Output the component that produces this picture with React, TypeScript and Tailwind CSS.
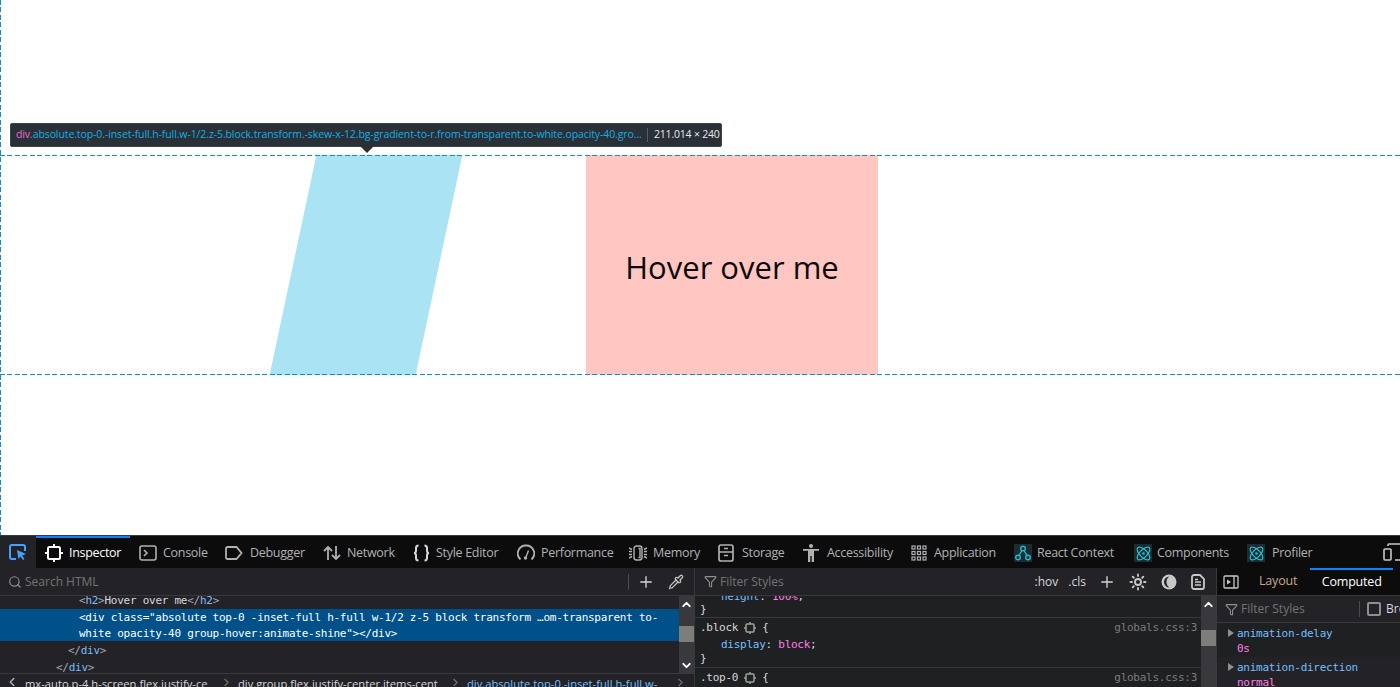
import { Atom, ChevronDown, ChevronLeft, ChevronRight, ChevronUp, Filter, Pipette, Plus, Search, Sun } from "lucide-react";
import type { ReactNode } from "react";

const uiFont = "font-['Open_Sans',sans-serif]";
const monoFont = "font-['DejaVu_Sans_Mono',monospace] text-[11px] tracking-[-0.26px]";

function InspectorIcon() {
  return (
    <svg width="18" height="18" viewBox="0 0 18 18" fill="none" stroke="#fff" strokeWidth="2">
      <rect x="3" y="3" width="12" height="12" rx="1.5" />
      <path d="M9 0v3M9 15v3M0 9h3M15 9h3" />
    </svg>
  );
}

function ConsoleIcon() {
  return (
    <svg width="18" height="16" viewBox="0 0 18 16" fill="none" stroke="#b1b1b3" strokeWidth="1.6">
      <rect x="1" y="1" width="16" height="14" rx="2" />
      <path d="M5 5l3 3-3 3" />
    </svg>
  );
}

function DebuggerIcon() {
  return (
    <svg width="18" height="14" viewBox="0 0 18 14" fill="none" stroke="#b1b1b3" strokeWidth="1.8">
      <path d="M2.5 1h9l5 6-5 6h-9A1.5 1.5 0 0 1 1 11.500v-9A1.500 1.500 0 0 1 2.500 1z" />
    </svg>
  );
}

function NetworkIcon() {
  return (
    <svg width="18" height="16" viewBox="0 0 18 16" fill="none" stroke="#b1b1b3" strokeWidth="1.8">
      <path d="M5 15V2M1 6l4-4 4 4M13 1v13M9 10l4 4 4-4" />
    </svg>
  );
}

function BracesIcon() {
  return (
    <svg width="17" height="18" viewBox="0 0 17 18" fill="none" stroke="#d7d7db" strokeWidth="2">
      <path d="M5.500 1.500C3.500 1.500 3 2.500 3 4v2.500C3 8 2.500 9 1 9c1.500 0 2 1 2 2.500V14c0 1.500.5 2.500 2.500 2.500" />
      <path d="M11.500 1.500c2 0 2.500 1 2.500 2.500v2.500c0 1.500.5 2.500 2 2.500-1.500 0-2 1-2 2.500V14c0 1.500-.5 2.500-2.500 2.500" />
    </svg>
  );
}

function GaugeIcon() {
  return (
    <svg width="18" height="18" viewBox="0 0 18 18" fill="none" stroke="#b1b1b3" strokeWidth="1.800">
      <path d="M3.500 15.500A8 8 0 0 1 9 1.500a8 8 0 0 1 5.500 14" />
      <path d="M9 13l2.500-6.500" strokeWidth="1.400" />
      <circle cx="8.500" cy="14" r="1.700" fill="#b1b1b3" stroke="none" />
    </svg>
  );
}

function MemoryIcon() {
  return (
    <svg width="18" height="16" viewBox="0 0 18 16" fill="none" stroke="#b1b1b3" strokeWidth="1.4">
      <rect x="5" y="1" width="8" height="14" rx="2.500" />
      <path d="M9.500 3.500h1.500v9H9.500M0 3l3 1.500M0 6.500h3M0 9.500h3M0 13l3-1.500M18 3l-3 1.500M18 6.500h-3M18 9.500h-3M18 13l-3-1.500" />
    </svg>
  );
}

function StorageIcon() {
  return (
    <svg width="16" height="18" viewBox="0 0 16 18" fill="none" stroke="#b1b1b3" strokeWidth="1.700">
      <rect x="1" y="1" width="14" height="16" rx="2" />
      <path d="M1 8h14M6 4.500h4M6 11.500h4" />
    </svg>
  );
}

function AccessibilityIcon() {
  return (
    <svg width="16" height="18" viewBox="0 0 16 18" fill="#b1b1b3">
      <circle cx="8" cy="2" r="2" />
      <path d="M0 5h16v1.800h-5V18H8.700v-6H7.300v6H5V6.800H0z" />
    </svg>
  );
}

function ApplicationIcon() {
  return (
    <svg width="16" height="16" viewBox="0 0 16 16" fill="none" stroke="#b1b1b3" strokeWidth="1.200">
      {[1, 6.500, 12].map((y) =>
        [1, 6.500, 12].map((x) => <rect key={`${x}-${y}`} x={x} y={y} width="3" height="3" />),
      )}
    </svg>
  );
}

function ContextIcon() {
  return (
    <span className="flex h-[18px] w-[18px] items-center justify-center bg-[#1d2a2e]">
      <svg width="16" height="16" viewBox="0 0 16 16" fill="none" stroke="#22b8cf" strokeWidth="1.400">
        <circle cx="8" cy="3.500" r="2.300" />
        <circle cx="3" cy="12.500" r="2.300" />
        <circle cx="13" cy="12.500" r="2.300" />
        <path d="M7 5.500l-3 5M9 5.500l3 5" />
      </svg>
    </span>
  );
}

function ReactIcon() {
  return (
    <span className="flex h-[18px] w-[18px] items-center justify-center bg-[#1d2a2e]">
      <Atom size={17} color="#22c3d8" strokeWidth={1.700} />
    </span>
  );
}

function PickerIcon() {
  return (
    <svg width="18" height="16" viewBox="0 0 18 16" fill="none">
      <path d="M7 15H3a2 2 0 0 1-2-2V3a2 2 0 0 1 2-2h11a2 2 0 0 1 2 2v4" stroke="#45a1ff" strokeWidth="2" />
      <path d="M8 6l9 4-4 1.500L15.500 15l-1.500 1-2.500-3.500L9.500 15z" fill="#45a1ff" />
    </svg>
  );
}

function MoonIcon() {
  return (
    <svg width="16" height="16" viewBox="0 0 16 16">
      <circle cx="8" cy="8" r="7.500" fill="#c8c8c8" />
      <path d="M8.500 2.500a5.500 5.500 0 0 0 0 11 6.500 6.500 0 0 1 0-11z" fill="#232327" />
    </svg>
  );
}

function DocIcon() {
  return (
    <svg width="14" height="16" viewBox="0 0 14 16" fill="none" stroke="#c8c8c8" strokeWidth="1.800">
      <path d="M3 1h6l4 4v8a2 2 0 0 1-2 2H3a2 2 0 0 1-2-2V3a2 2 0 0 1 2-2z" />
      <path d="M4 8h6M4 11h6M4 5.500h3" strokeWidth="1.300" />
    </svg>
  );
}

function DockIcon() {
  return (
    <svg width="17" height="18" viewBox="0 0 17 18" fill="none" stroke="#c8c8c8" strokeWidth="1.600">
      <rect x="1" y="6" width="7" height="11" rx="1" />
      <path d="M5 3V2a1 1 0 0 1 1-1h11M12 17h5" />
    </svg>
  );
}

function SidebarIcon() {
  return (
    <svg width="16" height="14" viewBox="0 0 16 14" fill="none" stroke="#c8c8c8" strokeWidth="1.300">
      <rect x="1" y="1" width="14" height="12" rx="1" />
      <path d="M11 1v12" />
      <path d="M4 4.500l4 2.500-4 2.500z" fill="#c8c8c8" stroke="none" />
    </svg>
  );
}

type Tab = { name: string; icon: ReactNode; width: string; gap: string; active?: boolean };

const tabs: Tab[] = [
  { name: "Inspector", icon: <InspectorIcon />, width: "w-[94px]", gap: "pl-[9px] gap-[6px]", active: true },
  { name: "Console", icon: <ConsoleIcon />, width: "w-[95px]", gap: "pl-[9px] gap-[6px]" },
  { name: "Debugger", icon: <DebuggerIcon />, width: "w-[98px]", gap: "pl-0 gap-[7px]" },
  { name: "Network", icon: <NetworkIcon />, width: "w-[90px]", gap: "pl-0 gap-[6px]" },
  { name: "Style Editor", icon: <BracesIcon />, width: "w-[104px]", gap: "pl-0 gap-[6px]" },
  { name: "Performance", icon: <GaugeIcon />, width: "w-[112px]", gap: "pl-0 gap-[6px]" },
  { name: "Memory", icon: <MemoryIcon />, width: "w-[89px]", gap: "pl-0 gap-[6px]" },
  { name: "Storage", icon: <StorageIcon />, width: "w-[85px]", gap: "pl-0 gap-[8px]" },
  { name: "Accessibility", icon: <AccessibilityIcon />, width: "w-[108px]", gap: "pl-0 gap-[8px]" },
  { name: "Application", icon: <ApplicationIcon />, width: "w-[103px]", gap: "pl-0 gap-[7px]" },
  { name: "React Context", icon: <ContextIcon />, width: "w-[120px]", gap: "pl-0 gap-[5px]" },
  { name: "Components", icon: <ReactIcon />, width: "w-[113px]", gap: "pl-0 gap-[5px]" },
  { name: "Profiler", icon: <ReactIcon />, width: "w-[136px]", gap: "pl-0 gap-[7px]" },
];

function Toolbar() {
  return (
    <div className={`flex h-[32px] shrink-0 bg-[#0c0c0d] ${uiFont} text-[12.500px] tracking-[-0.3px]`}>
      <div className="flex w-[36px] items-center justify-center bg-[#232327]">
        <PickerIcon />
      </div>
      {tabs.map((tab) => (
        <div
          key={tab.name}
          className={`flex shrink-0 items-center border-t-2 ${tab.width} ${tab.gap} ${
            tab.active ? "border-[#0a84ff] text-white" : "border-transparent text-[#b1b1b3]"
          }`}
        >
          {tab.icon}
          <span className="whitespace-nowrap">{tab.name}</span>
        </div>
      ))}
      <div className="flex flex-1 items-center justify-end overflow-hidden">
        <DockIcon />
      </div>
    </div>
  );
}

function ScrollBar({ thumb, showDown = true }: { thumb: string; showDown?: boolean }) {
  return (
    <div className="flex h-full w-[15px] shrink-0 flex-col items-center bg-[#38383d]">
      <ChevronUp size={13} color="#fff" strokeWidth={3.500} className="mt-[2px] shrink-0" />
      <div className={`${thumb} h-[16px] w-full shrink-0 bg-[#7d7d7a]`} />
      {showDown && <ChevronDown size={13} color="#fff" strokeWidth={3.500} className="mt-auto mb-[1px]" />}
    </div>
  );
}

function MarkupPanel() {
  return (
    <div className="flex w-[695px] shrink-0 flex-col border-r border-[#38383d]">
      <div className={`flex h-[28px] shrink-0 items-center border-b border-[#38383d] bg-[#232327] pl-[8px] ${uiFont} text-[12px] text-[#737373]`}>
        <Search size={14} color="#8f8f8f" strokeWidth={2} />
        <span className="ml-[3px]">Search HTML</span>
        <div className="ml-auto h-[16px] w-px bg-[#4a4a4f]" />
        <Plus size={18} color="#d4d4d4" strokeWidth={1.800} className="ml-[8px]" />
        <Pipette size={16} color="#c8c8c8" strokeWidth={1.800} className="mr-[10px] ml-[13px]" />
      </div>
      <div className="flex h-[77px] shrink-0 bg-[#232327]">
        <div className={`min-w-0 flex-1 overflow-hidden ${monoFont} text-[#d7d7db]`}>
          <div className="h-[13px] pl-[79px] leading-[10px] whitespace-nowrap">
            <span className="text-[#a9a9ad]">&lt;</span>
            <span className="text-[#75bfff]">h2</span>
            <span className="text-[#a9a9ad]">&gt;</span>Hover over me
            <span className="text-[#a9a9ad]">&lt;/</span>
            <span className="text-[#75bfff]">h2</span>
            <span className="text-[#a9a9ad]">&gt;</span>
          </div>
          <div className="h-[32px] bg-[#00508a] pt-[1px] pl-[79px] leading-[15.500px] text-white">
            <div className="whitespace-nowrap">
              &lt;div class="absolute top-0 -inset-full h-full w-1/2 z-5 block transform …om-transparent to-
            </div>
            <div className="whitespace-nowrap">white opacity-40 group-hover:animate-shine"&gt;&lt;/div&gt;</div>
          </div>
          <div className="mt-[1px] h-[17px] pl-[68px] leading-[17px]">
            <span className="text-[#a9a9ad]">&lt;/</span>
            <span className="text-[#75bfff]">div</span>
            <span className="text-[#a9a9ad]">&gt;</span>
          </div>
          <div className="h-[17px] pl-[56px] leading-[17px]">
            <span className="text-[#a9a9ad]">&lt;/</span>
            <span className="text-[#75bfff]">div</span>
            <span className="text-[#a9a9ad]">&gt;</span>
          </div>
        </div>
        <ScrollBar thumb="mt-[15px]" />
      </div>
      <div className={`flex h-[16px] shrink-0 items-start overflow-hidden border-t border-[#38383d] bg-[#232327] ${uiFont} text-[11.200px] leading-[20px] whitespace-nowrap text-[#d7d7db]`}>
        <ChevronLeft size={14} color="#b1b1b3" strokeWidth={2.500} className="mt-[1px] ml-[5px] shrink-0" />
        <span className="ml-[6px] w-[183px] shrink-0 overflow-hidden">mx-auto.p-4.h-screen.flex.justify-ce</span>
        <ChevronRight size={13} color="#737373" strokeWidth={2} className="mt-[2px] ml-[12px] shrink-0" />
        <span className="ml-[5px] w-[200px] shrink-0 overflow-hidden">div.group.flex.justify-center.items-cent</span>
        <ChevronRight size={13} color="#737373" strokeWidth={2} className="mt-[2px] ml-[11px] shrink-0" />
        <span className="ml-[5px] w-[193px] shrink-0 overflow-hidden text-[#75bfff]">div.absolute.top-0.-inset-full.h-full.w-</span>
        <ChevronRight size={13} color="#737373" strokeWidth={2} className="mt-[2px] ml-[14px] shrink-0" />
      </div>
    </div>
  );
}

function RuleSource() {
  return <span className="text-[#7c7c7c]">globals.css:3</span>;
}

function NodeIcon() {
  return (
    <svg width="12" height="12" viewBox="0 0 12 12" fill="none" stroke="#a0a0a0" strokeWidth="1.500" className="mx-[6px] inline">
      <rect x="2" y="2" width="8" height="8" rx="1" />
      <path d="M6 0v2M6 10v2M0 6h2M10 6h2" />
    </svg>
  );
}

function RulesPanel() {
  return (
    <div className="flex w-[522px] shrink-0 flex-col border-r border-[#38383d]">
      <div className={`flex h-[28px] shrink-0 items-center border-b border-[#38383d] bg-[#232327] pl-[9px] ${uiFont} text-[12px] text-[#737373]`}>
        <Filter size={13} color="#8f8f8f" strokeWidth={2} />
        <span className="ml-[3px]">Filter Styles</span>
        <span className="ml-auto text-[#d7d7db]">:hov</span>
        <span className="ml-[10px] text-[#d7d7db]">.cls</span>
        <Plus size={18} color="#d4d4d4" strokeWidth={1.800} className="ml-[12px]" />
        <Sun size={18} color="#c8c8c8" strokeWidth={2.500} className="ml-[13px]" />
        <span className="ml-[14px]">
          <MoonIcon />
        </span>
        <span className="mr-[11px] ml-[14px]">
          <DocIcon />
        </span>
      </div>
      <div className="flex h-[93px] shrink-0 bg-[#1f2021]">
        <div className={`min-w-0 flex-1 overflow-hidden ${monoFont} text-[#d7d7db]`}>
          <div className="h-[6px] overflow-hidden pl-[26px] leading-[1px]">
            <span className="text-[#75bfff]">height</span>: <span className="text-[#ff7de9]">100%</span>;
          </div>
          <div className="h-[16px] border-b border-[#38383d] pl-[5px] leading-[15px]">{"}"}</div>
          <div className="flex h-[17px] items-center justify-between pt-[3px] pr-[4px] pl-[5px]">
            <span>
              .block
              <NodeIcon />
              {"{"}
            </span>
            <RuleSource />
          </div>
          <div className="h-[17px] pl-[26px] leading-[19px]">
            <span className="text-[#75bfff]">display</span>: <span className="text-[#ff7de9]">block</span>;
          </div>
          <div className="h-[16px] border-b border-[#38383d] pl-[5px] leading-[14px]">{"}"}</div>
          <div className="flex h-[17px] items-center justify-between pt-[4px] pr-[4px] pl-[5px]">
            <span>
              .top-0
              <NodeIcon />
              {"{"}
            </span>
            <RuleSource />
          </div>
        </div>
        <ScrollBar thumb="mt-[19px]" showDown={false} />
      </div>
    </div>
  );
}

function ComputedPanel() {
  return (
    <div className="flex min-w-0 flex-1 flex-col overflow-hidden">
      <div className={`flex h-[28px] shrink-0 items-center border-b border-[#38383d] bg-[#0c0c0d] ${uiFont} text-[12.500px] tracking-[-0.2px]`}>
        <span className="ml-[6px]">
          <SidebarIcon />
        </span>
        <span className="ml-[20px] text-[#c8a888]">Layout</span>
        <div className="ml-[13px] flex h-full w-[83px] items-center justify-center border-t-2 border-[#0a84ff] text-white">
          Computed
        </div>
      </div>
      <div className={`flex h-[27px] shrink-0 items-center border-b border-[#38383d] bg-[#232327] pl-[8px] ${uiFont} text-[12px] whitespace-nowrap text-[#737373]`}>
        <Filter size={13} color="#8f8f8f" strokeWidth={2} className="shrink-0" />
        <span className="ml-[3px] w-[118px] shrink-0">Filter Styles</span>
        <div className="h-[16px] w-px shrink-0 bg-[#4a4a4f]" />
        <div className="ml-[7px] h-[14px] w-[14px] shrink-0 rounded-[2px] border-2 border-[#8f8f8f]" />
        <span className="ml-[5px] text-[#d7d7db]">Browser</span>
      </div>
      <div className={`flex-1 overflow-hidden bg-[#1f2021] ${monoFont}`}>
        <div className="h-[34px] pt-[3px] leading-[15px]">
          <div className="relative pl-[20px] text-[#75bfff]">
            <span className="absolute top-[3px] left-[11px] border-y-[4px] border-l-[6px] border-y-transparent border-l-[#8f8f8f]" />
            animation-delay
          </div>
          <div className="pl-[20px] text-[#ff7de9]">0s</div>
        </div>
        <div className="h-[31px] bg-[#232327] pt-[3px] leading-[15px]">
          <div className="relative pl-[20px] text-[#75bfff]">
            <span className="absolute top-[3px] left-[11px] border-y-[4px] border-l-[6px] border-y-transparent border-l-[#8f8f8f]" />
            animation-direction
          </div>
          <div className="pl-[20px] text-[#ff7de9]">normal</div>
        </div>
      </div>
    </div>
  );
}

function PreviewArea() {
  return (
    <div className="relative h-[535px] shrink-0 bg-white pt-[155px]">
      {/* highlighter guides drawn over the page */}
      <div className="absolute top-0 left-0 h-full w-px bg-[repeating-linear-gradient(180deg,#0a8fd0_0,#0a8fd0_5px,transparent_5px,transparent_7.500px)]" />
      <div className="relative flex h-[220px]">
        <div className="absolute top-0 left-[293px] h-full w-[146px] -skew-x-12 bg-[#aae4f4]" />
        <div className={`ml-[586px] flex h-full w-[292px] items-center justify-center bg-[#ffc6c2] pt-[5px] ${uiFont} text-[31px] text-[#0a0a0a]`}>
          Hover over me
        </div>
        <div className="absolute top-0 left-0 h-px w-full bg-[repeating-linear-gradient(90deg,#0a8fd0_0,#0a8fd0_5px,transparent_5px,transparent_7.500px)]" />
        <div className="absolute bottom-0 left-0 h-px w-full bg-[repeating-linear-gradient(90deg,#0a8fd0_0,#0a8fd0_5px,transparent_5px,transparent_7.500px)]" />
        {/* infobar above the highlighted node */}
        <div className={`absolute top-[-32px] left-[10px] flex h-[24px] w-[712px] items-center rounded-[2px] border border-[#3d434b] bg-[#2a3037] pl-[5px] ${uiFont} text-[10.500px] whitespace-nowrap`}>
          <span className="w-[631px] overflow-hidden tracking-[-0.1px] text-[#12aee2]">
            <span className="text-[#f06ad0]">div</span>
            .absolute.top-0.-inset-full.h-full.w-1/2.z-5.block.transform.-skew-x-12.bg-gradient-to-r.from-transparent.to-white.opacity-40.gro...
          </span>
          <span className="h-[14px] w-px bg-[#5a5f66]" />
          <span className="ml-[6px] tracking-[-0.2px] text-[#e8e8e8]">211.014 × 240</span>
          <span className="absolute bottom-[-7px] left-[349px] border-x-[7px] border-t-[7px] border-x-transparent border-t-[#2a3037]" />
        </div>
      </div>
    </div>
  );
}

export default function App() {
  return (
    <div className="flex h-[687px] w-[1400px] flex-col overflow-hidden bg-white">
      <PreviewArea />
      <div className="flex h-[152px] shrink-0 flex-col border-t border-[#38383d] bg-[#232327]">
        <Toolbar />
        <div className="flex min-h-0 flex-1">
          <MarkupPanel />
          <RulesPanel />
          <ComputedPanel />
        </div>
      </div>
    </div>
  );
}
